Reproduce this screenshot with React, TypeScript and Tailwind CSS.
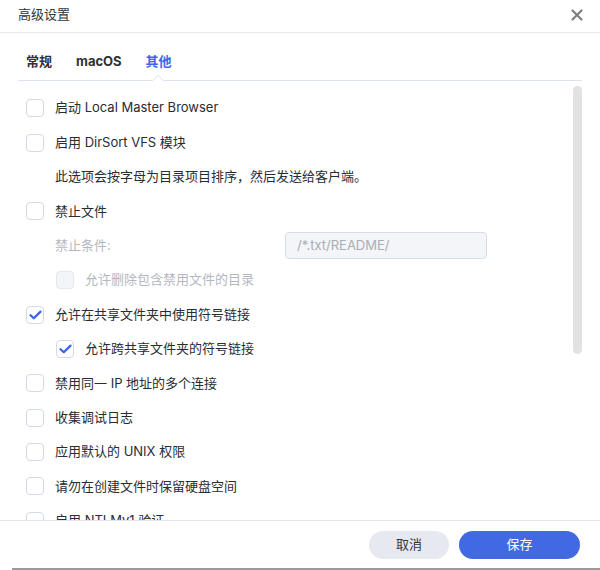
import React from 'react';

type Row =
  | { kind: 'check'; label: string; checked?: boolean; indent?: boolean; disabled?: boolean }
  | { kind: 'note'; label: string }
  | { kind: 'field'; label: string; value: string };

const rows: Row[] = [
  { kind: 'check', label: '启动 Local Master Browser' },
  { kind: 'check', label: '启用 DirSort VFS 模块' },
  { kind: 'note', label: '此选项会按字母为目录项目排序，然后发送给客户端。' },
  { kind: 'check', label: '禁止文件' },
  { kind: 'field', label: '禁止条件:', value: '/*.txt/README/' },
  { kind: 'check', label: '允许删除包含禁用文件的目录', indent: true, disabled: true },
  { kind: 'check', label: '允许在共享文件夹中使用符号链接', checked: true },
  { kind: 'check', label: '允许跨共享文件夹的符号链接', checked: true, indent: true },
  { kind: 'check', label: '禁用同一 IP 地址的多个连接' },
  { kind: 'check', label: '收集调试日志' },
  { kind: 'check', label: '应用默认的 UNIX 权限' },
  { kind: 'check', label: '请勿在创建文件时保留硬盘空间' },
  { kind: 'check', label: '启用 NTLMv1 验证' },
];

const Checkbox: React.FC<{ checked?: boolean; disabled?: boolean }> = ({ checked, disabled }) => (
  <span
    className={`flex h-[18px] w-[18px] shrink-0 items-center justify-center rounded-[4px] border ${
      disabled ? 'border-[#e3e7ee] bg-[#f3f5f8]' : 'border-[#d3dae5] bg-white'
    }`}
  >
    {checked && (
      <svg width="13" height="10" viewBox="0 0 13 10" fill="none">
        <path d="M1.5 5.2 L4.8 8.3 L11.5 1.6" stroke="#3a63e8" strokeWidth="2.2" strokeLinecap="round" strokeLinejoin="round" />
      </svg>
    )}
  </span>
);

const App: React.FC = () => {
  return (
    <div
      className="flex h-[570px] w-[600px] flex-col bg-white text-[13px] text-[#282c33]"
      style={{ fontFamily: 'Inter, "Noto Sans CJK SC", sans-serif' }}
    >
      {/* Title bar */}
      <div className="flex h-[33px] shrink-0 items-center justify-between border-b border-[#e6eaf0] pb-[2px] pl-[18px] pr-[17px]">
        <span className="text-[13px] text-[#31353b]">高级设置</span>
        <svg width="12" height="12" viewBox="0 0 12 12">
          <path d="M1.5 1.5 L10.5 10.5 M10.5 1.5 L1.5 10.5" stroke="#7c7f85" strokeWidth="2.2" strokeLinecap="round" />
        </svg>
      </div>

      {/* Tabs */}
      <div className="relative mx-[18px] flex h-[48px] shrink-0 items-end gap-[24px] border-b border-[#dde3ec] pb-[9px] pl-[8px] font-bold">
        <span className="text-[#2d3137]">常规</span>
        <span className="text-[#2d3137]">macOS</span>
        <span className="text-[#3b66f0]">其他</span>
        <svg className="absolute bottom-[-1px] left-[134px]" width="12" height="6" viewBox="0 0 12 6">
          <path d="M0 6 L6 0.5 L12 6" fill="white" stroke="#dde3ec" strokeWidth="1" />
          <path d="M0.8 6 L11.2 6" stroke="white" strokeWidth="1.2" />
        </svg>
      </div>

      {/* Scrollable option list */}
      <div className="relative flex-1 overflow-hidden">
        <div className="flex flex-col pl-[26px] pt-[10px]">
          {rows.map((row, i) => {
            if (row.kind === 'note') {
              return (
                <div key={i} className="flex h-[34.4px] items-center pl-[29px]">
                  {row.label}
                </div>
              );
            }
            if (row.kind === 'field') {
              return (
                <div key={i} className="flex h-[34.4px] items-center pl-[29px]">
                  <span className="w-[230px] text-[#b3b8c0]">{row.label}</span>
                  <div className="flex h-[27px] w-[202px] items-center rounded-[4px] border border-[#d7dde7] bg-[#f3f5f8] px-[11px] text-[#a9aeb6]">
                    {row.value}
                  </div>
                </div>
              );
            }
            return (
              <div key={i} className={`flex h-[34.4px] items-center gap-[11px] ${row.indent ? 'pl-[30px]' : ''}`}>
                <Checkbox checked={row.checked} disabled={row.disabled} />
                <span className={row.disabled ? 'text-[#b3b8c0]' : ''}>{row.label}</span>
              </div>
            );
          })}
        </div>
        <div className="absolute right-[18px] top-[5px] h-[268px] w-[9px] rounded-full bg-[#e2e2e2]" />
      </div>

      {/* Footer */}
      <div className="flex h-[48px] shrink-0 items-center justify-end gap-[10px] border-t border-[#e3e8ef] pr-[20px]">
        <button className="h-[28px] w-[80px] rounded-full bg-[#e6e9ef] text-[13px] text-[#33373d]">取消</button>
        <button className="h-[28px] w-[121px] rounded-full bg-[#4169e1] text-[13px] text-white">保存</button>
      </div>
      <div className="ml-[12px] h-[2px] shrink-0 bg-[#9a9a9a]" />
    </div>
  );
};

export default App;
